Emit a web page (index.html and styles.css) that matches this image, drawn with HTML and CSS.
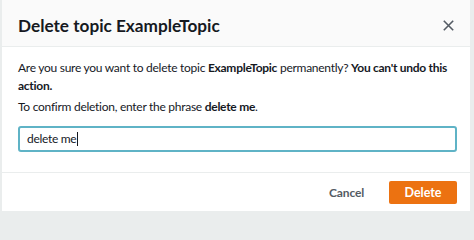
FILE: index.html
```html
<!DOCTYPE html>
<html lang="en">
<head>
<meta charset="utf-8">
<title>Delete topic</title>
<link rel="stylesheet" href="styles.css">
</head>
<body>
<div class="dialog">
  <div class="header">
    <h2 class="title">Delete topic ExampleTopic</h2>
    <button class="close" aria-label="Close">
      <svg width="11" height="11" viewBox="0 0 11 11"><path d="M0.8 0.8 L10.2 10.2 M10.2 0.8 L0.8 10.2" stroke="#545b64" stroke-width="1.6" fill="none"/></svg>
    </button>
  </div>
  <div class="body">
    <p class="line">Are you sure you want to delete topic <b>ExampleTopic</b> permanently? <b>You can't undo this</b> <b>action.</b></p>
    <p class="line confirm">To confirm deletion, enter the phrase <b>delete me</b>.</p>
    <div class="input">delete me<span class="caret"></span></div>
  </div>
  <div class="footer">
    <button class="btn-link">Cancel</button>
    <button class="btn-primary">Delete</button>
  </div>
</div>
</body>
</html>
```
FILE: styles.css
```css
html, body {
  margin: 0;
  padding: 0;
  background: #eaeded;
  font-family: "Lato", "Noto Sans", sans-serif;
  color: #16191f;
}
.dialog {
  margin-left: 2px;
  width: 468px;
  height: 211px;
  background: #ffffff;
  display: flex;
  flex-direction: column;
}
.header {
  height: 47px;
  background: #fafafa;
  border-bottom: 1px solid #eaeded;
  display: flex;
  align-items: center;
  justify-content: space-between;
  padding: 4px 15px 0 16px;
  box-sizing: border-box;
}
.title {
  margin: 0;
  font-size: 17.2px;
  font-weight: 700;
}
.close {
  border: 0;
  background: none;
  padding: 0;
  width: 14px;
  height: 14px;
  display: flex;
  align-items: center;
  justify-content: center;
}
.body {
  flex: 1;
  padding: 12px 13px 0 16px;
  border-bottom: 1px solid #eaeded;
}
.line {
  margin: 0;
  font-size: 12px;
  letter-spacing: -0.27px;
  line-height: 18px;
}
.confirm {
  margin-top: 3px;
}
.input {
  margin-top: 10px;
  height: 22px;
  border: 2px solid #5fb3c6;
  border-radius: 3px;
  font-size: 12px;
  letter-spacing: -0.3px;
  line-height: 22px;
  padding-left: 7px;
  color: #16191f;
  display: flex;
  align-items: center;
}
.caret {
  display: inline-block;
  width: 1px;
  height: 14px;
  margin-left: 1px;
  background: #16191f;
}
.footer {
  height: 38px;
  display: flex;
  align-items: center;
  justify-content: flex-end;
  padding: 0 13px;
  gap: 25px;
}
.btn-link {
  border: 0;
  background: none;
  font-family: inherit;
  font-weight: 700;
  font-size: 12px;
  letter-spacing: -0.15px;
  color: #545b64;
  padding: 0;
}
.btn-primary {
  border: 0;
  background: #ec7211;
  color: #ffffff;
  font-family: inherit;
  font-weight: 700;
  font-size: 12.5px;
  width: 68px;
  height: 23px;
  border-radius: 2px;
  padding: 0;
}
```
